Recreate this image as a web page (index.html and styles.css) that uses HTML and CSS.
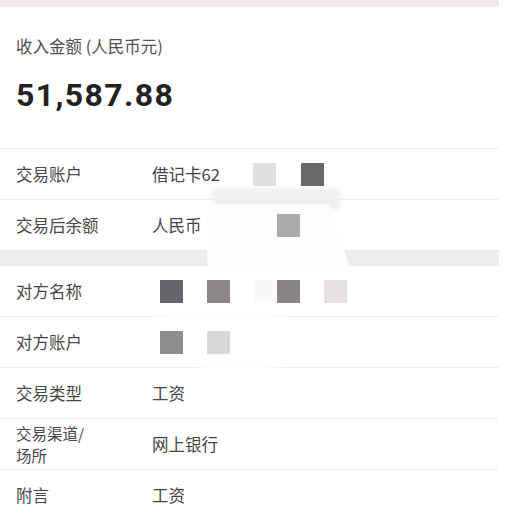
FILE: index.html
```html
<!DOCTYPE html>
<html lang="zh-CN">
<head>
<meta charset="utf-8">
<title>交易详情</title>
<link rel="stylesheet" href="styles.css">
</head>
<body>
<div class="page">
  <div class="top-bar"></div>
  <section class="summary">
    <div class="summary-label">收入金额 (人民币元)</div>
    <div class="amount">51,587.88</div>
  </section>
  <div class="list">
    <div class="row">
      <div class="label">交易账户</div>
      <div class="value"><span class="txt w1">借记卡62</span><i class="sq c-light1"></i><i class="sq c-dark1 g25"></i></div>
    </div>
    <div class="row">
      <div class="label">交易后余额</div>
      <div class="value"><span class="txt w2">人民币</span><i class="sq c-mid1"></i></div>
    </div>
    <div class="band"></div>
    <div class="row">
      <div class="label">对方名称</div>
      <div class="value"><i class="sq c-dark2 g8"></i><i class="sq c-mid2 g24"></i><i class="sq c-faint g24"></i><i class="sq c-mid3"></i><i class="sq c-light2 g24"></i></div>
    </div>
    <div class="row">
      <div class="label">对方账户</div>
      <div class="value"><i class="sq c-mid4 g8"></i><i class="sq c-light3 g24"></i></div>
    </div>
    <div class="row">
      <div class="label">交易类型</div>
      <div class="value">工资</div>
    </div>
    <div class="row">
      <div class="label two-line"><span class="ln">交易渠道/</span><span class="ln">场所</span></div>
      <div class="value">网上银行</div>
    </div>
    <div class="row">
      <div class="label">附言</div>
      <div class="value">工资</div>
    </div>
    <div class="smear smear-gray"></div>
    <div class="smear smear-white"></div>
    <div class="smear fade1"></div>
    <div class="smear fade2"></div>
  </div>
</div>
</body>
</html>
```

FILE: styles.css
```css
html, body {
  margin: 0;
  padding: 0;
  background: #ffffff;
}
body {
  font-family: "Noto Sans CJK SC", Roboto, "Noto Sans", sans-serif;
  color: #4a4a4a;
}
.page {
  width: 499px;
  background: #ffffff;
  overflow: hidden;
  height: 513px;
}
.top-bar {
  height: 7px;
  background: #efebeb;
}
.summary {
  height: 141px;
  padding-left: 16px;
  box-sizing: border-box;
  padding-top: 28px;
}
.summary-label {
  font-size: 16.5px;
  line-height: 22px;
  color: #505050;
}
.amount {
  margin-top: 18px;
  font-family: Roboto, "Liberation Sans", sans-serif;
  font-weight: 700;
  font-size: 32px;
  letter-spacing: 1.4px;
  line-height: 40px;
  color: #222222;
}
.list {
  position: relative;
}
.row {
  display: flex;
  align-items: center;
  height: 51px;
  box-sizing: border-box;
  border-top: 1px solid #eeeeee;
  padding-left: 16px;
  font-size: 16.5px;
  line-height: 21px;
}
.label {
  width: 136px;
  flex: none;
  color: #484848;
}
.two-line {
  display: flex;
  flex-direction: column;
  font-size: 15.5px;
  line-height: 22.5px;
}
.ln {
  display: block;
}
.value {
  display: flex;
  align-items: center;
  color: #444444;
}
.band {
  height: 15px;
  background: #ededed;
  border-top: 1px solid #e6e6e6;
  box-sizing: border-box;
}
.txt { display: inline-block; flex: none; }
.w1 { width: 101px; }
.w2 { width: 125px; }
.sq {
  display: block;
  width: 23px;
  height: 23px;
  flex: none;
  position: relative;
  z-index: 2;
  filter: blur(0.4px);
}
.g8 { margin-left: 8px; }
.g24 { margin-left: 24px; }
.g25 { margin-left: 25px; }
.c-light1 { background: #e1dfe1; }
.c-dark1 { background: #6b686b; }
.c-mid1 { background: #aba9ab; }
.c-dark2 { background: #67636a; }
.c-mid2 { background: #8b8488; }
.c-faint { background: #faf8f9; }
.c-mid3 { background: #8a8387; }
.c-light2 { background: #e6e0e3; }
.c-mid4 { background: #8e8c8e; }
.c-light3 { background: #d9d7d9; }
.smear {
  position: absolute;
  z-index: 1;
}
.smear-gray {
  top: 40px;
  left: 212px;
  width: 128px;
  height: 22px;
  background: #f1efef;
  filter: blur(2px);
}
.smear-white {
  top: 56px;
  left: 200px;
  width: 150px;
  height: 64px;
  background: #fdfdfd;
  clip-path: polygon(4% 0, 86% 0, 100% 100%, 5% 100%);
  filter: blur(1px);
}
.fade1 {
  top: 165px;
  left: 140px;
  width: 160px;
  height: 4px;
  background: linear-gradient(90deg, rgba(255,255,255,0), #fdfdfd 25%, #fdfdfd 75%, rgba(255,255,255,0));
}
.fade2 {
  top: 216px;
  left: 190px;
  width: 95px;
  height: 4px;
  background: linear-gradient(90deg, rgba(255,255,255,0), #fdfdfd 20%, #fdfdfd 80%, rgba(255,255,255,0));
}
```
